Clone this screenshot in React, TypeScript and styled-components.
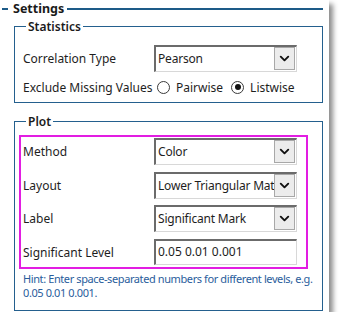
import React from "react";
import styled, { createGlobalStyle } from "styled-components";
import { ChevronDown } from "lucide-react";

const GlobalStyle = createGlobalStyle`
  html, body {
    margin: 0;
    padding: 0;
    background: #ffffff;
  }
  body {
    font-family: "Noto Sans", "Open Sans", sans-serif;
    font-size: 12px;
    color: #1e1e1e;
  }
`;

const Window = styled.div`
  width: 329px;
  height: 312px;
  box-sizing: border-box;
  background: #ffffff;
  box-shadow: 4px 4px 5px rgba(0, 0, 0, 0.45);
  padding: 0 6px 0 14px;
`;

const Header = styled.div`
  display: flex;
  align-items: center;
  margin-left: -12px;
  height: 17px;
`;

const HeaderLine = styled.div<{ $grow?: boolean }>`
  height: 2px;
  background: #1d5b88;
  width: 6px;
  flex: ${(p) => (p.$grow ? 1 : "none")};
`;

const HeaderText = styled.span`
  font-weight: 700;
  font-size: 12.5px;
  padding: 0 3px 0 5px;
  color: #1a1a1a;
`;

const Group = styled.fieldset<{ $top: number; $pad: string }>`
  margin: ${(p) => p.$top}px 0 0 0;
  border: 1px solid #24608e;
  padding: ${(p) => p.$pad};
  min-width: 0;
`;

const Legend = styled.legend`
  font-size: 12px;
  font-weight: 600;
  padding: 0 2px;
  margin-left: 3px;
  line-height: 15px;
  color: #1a1a1a;
`;

const Row = styled.div<{ $h?: number }>`
  display: grid;
  grid-template-columns: 131px 143px;
  align-items: center;
  height: ${(p) => p.$h ?? 27}px;
`;

const Label = styled.span`
  font-size: 12px;
  white-space: nowrap;
`;

const SelectBox = styled.div`
  display: flex;
  align-items: stretch;
  height: 27px;
  box-sizing: border-box;
  border-top: 2px solid #6b6b6b;
  border-left: 2px solid #6b6b6b;
  border-bottom: 1px solid #d8d8d8;
  border-right: 1px solid #d8d8d8;
  background: #ffffff;
`;

const SelectText = styled.span`
  flex: 1;
  overflow: hidden;
  white-space: nowrap;
  text-overflow: clip;
  padding-left: 2px;
  line-height: 23px;
  font-size: 12px;
  letter-spacing: -0.2px;
`;

const DropButton = styled.div`
  width: 19px;
  margin: 0 1px 1px 0;
  background: #ececec;
  border: 1px solid #a8a8a8;
  display: flex;
  align-items: center;
  justify-content: center;
`;

const TextBox = styled.div`
  height: 26px;
  box-sizing: border-box;
  border-top: 2px solid #6b6b6b;
  border-left: 2px solid #6b6b6b;
  border-bottom: 1px solid #d8d8d8;
  border-right: 1px solid #d8d8d8;
  padding-left: 2px;
  line-height: 22px;
  font-size: 12px;
`;

const Radios = styled.div`
  display: flex;
  align-items: center;
  gap: 8px;
  margin-left: 3px;
`;

const RadioItem = styled.label`
  display: flex;
  align-items: center;
  gap: 6px;
  font-size: 12px;
`;

const RadioCircle = styled.span<{ $on?: boolean }>`
  width: 11px;
  height: 11px;
  border: 1px solid #3a3a3a;
  border-radius: 50%;
  display: flex;
  align-items: center;
  justify-content: center;
  &::after {
    content: "";
    width: 6px;
    height: 6px;
    border-radius: 50%;
    background: ${(p) => (p.$on ? "#111" : "transparent")};
  }
`;

const Highlight = styled.div`
  margin: 6px 6px 0 -4px;
  border: 2px solid #e21de2;
  padding: 1px 0 2px 2px;
  display: flex;
  flex-direction: column;
  gap: 6.7px;
`;

const Hint = styled.p`
  margin: 3px 0 0 0;
  font-size: 11px;
  letter-spacing: -0.4px;
  line-height: 13.5px;
  color: #2a5d9c;
  white-space: nowrap;
`;

const Select: React.FC<{ value: string }> = ({ value }) => (
  <SelectBox>
    <SelectText>{value}</SelectText>
    <DropButton>
      <ChevronDown size={15} strokeWidth={3} color="#111" />
    </DropButton>
  </SelectBox>
);

const App: React.FC = () => {
  return (
    <>
      <GlobalStyle />
      <Window>
        <Header>
          <HeaderLine />
          <HeaderText>Settings</HeaderText>
          <HeaderLine $grow />
        </Header>
        <Group $top={2} $pad="11px 8px 0 8px">
          <Legend>Statistics</Legend>
          <Row>
            <Label>Correlation Type</Label>
            <Select value="Pearson" />
          </Row>
          <Row $h={30}>
            <Label>Exclude Missing Values</Label>
            <Radios>
              <RadioItem>
                <RadioCircle />
                Pairwise
              </RadioItem>
              <RadioItem>
                <RadioCircle $on />
                Listwise
              </RadioItem>
            </Radios>
          </Row>
        </Group>
        <Group $top={11} $pad="0 8px 11px 8px">
          <Legend>Plot</Legend>
          <Highlight>
            <Row>
              <Label>Method</Label>
              <Select value="Color" />
            </Row>
            <Row>
              <Label>Layout</Label>
              <Select value="Lower Triangular Matrix" />
            </Row>
            <Row>
              <Label>Label</Label>
              <Select value="Significant Mark" />
            </Row>
            <Row $h={26}>
              <Label>Significant Level</Label>
              <TextBox>0.05 0.01 0.001</TextBox>
            </Row>
          </Highlight>
          <Hint>
            Hint: Enter space-separated numbers for different levels, e.g.
            <br />
            0.05 0.01 0.001.
          </Hint>
        </Group>
      </Window>
    </>
  );
};

export default App;
